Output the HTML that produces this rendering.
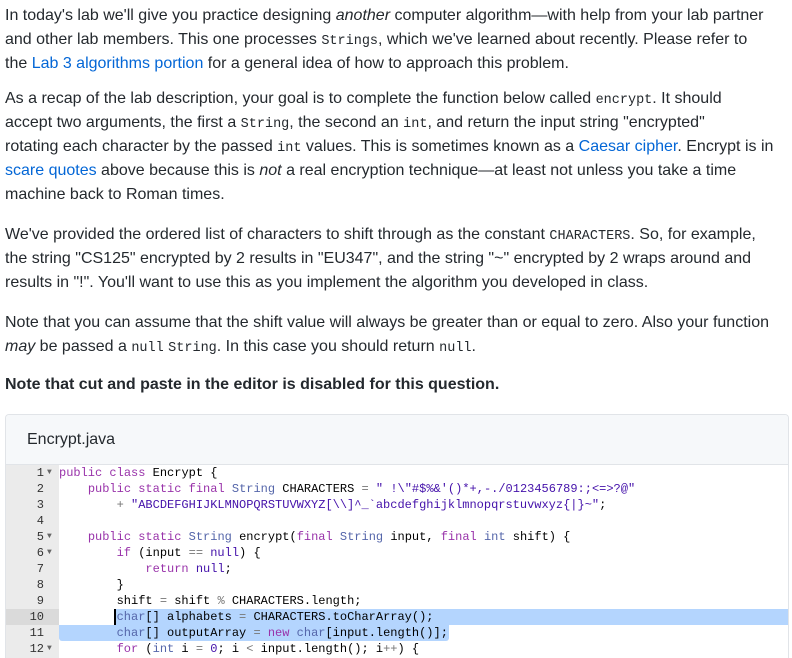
<!DOCTYPE html>
<html><head><style>
html,body{margin:0;height:658px;overflow:hidden}
body{background:#fff;font-family:"Liberation Sans",sans-serif;font-size:16px;line-height:24px;color:#24292e;}
.w{position:absolute;left:5px;top:0;width:787px;white-space:nowrap;overflow:hidden;height:410px}
p{margin:0;position:absolute;left:0}
a{color:#0366d6;text-decoration:none}
code{font-family:"Liberation Mono",monospace;font-size:13.5px;line-height:1}
.card{position:absolute;left:5px;top:414px;width:782px;height:243px;border:1px solid #e1e4e8;border-bottom:none;border-radius:4px 4px 0 0;overflow:hidden}
.hd{height:49px;background:#f6f8fa;border-bottom:1px solid #e1e4e8;font-size:16px;line-height:49px;padding-left:21px;color:#24292e}
.gut{position:absolute;left:0;top:50px;width:53px;height:200px;background:#ebebeb}
.code{position:absolute;left:0;top:50px;width:782px;font-family:"Liberation Mono",monospace;font-size:12px;line-height:16px;color:#000}
.ln{position:absolute;left:0;width:38px;text-align:right;color:#333}
.ar{position:absolute;left:41px;font-size:8px;color:#666}
.tx{position:absolute;left:53px;white-space:pre}
.k{color:#93a}.t{color:#56a}.s{color:#41a}.c{color:#a0a}.o{color:#777}
</style></head><body>
<div class="w">
<p style="top:4px">In today's lab we'll give you practice designing <i>another</i> computer algorithm—with help from your lab partner<br>and other lab members. This one processes <code>Strings</code>, which we've learned about recently. Please refer to<br>the <a>Lab 3 algorithms portion</a> for a general idea of how to approach this problem.</p>
<p style="top:87px">As a recap of the lab description, your goal is to complete the function below called <code>encrypt</code>. It should<br>accept two arguments, the first a <code>String</code>, the second an <code>int</code>, and return the input string "encrypted"<br>rotating each character by the passed <code>int</code> values. This is sometimes known as a <a>Caesar cipher</a>. Encrypt is in<br><a>scare quotes</a> above because this is <i>not</i> a real encryption technique—at least not unless you take a time<br>machine back to Roman times.</p>
<p style="top:223px">We've provided the ordered list of characters to shift through as the constant <code>CHARACTERS</code>. So, for example,<br>the string "CS125" encrypted by 2 results in "EU347", and the string "~" encrypted by 2 wraps around and<br>results in "!". You'll want to use this as you implement the algorithm you developed in class.</p>
<p style="top:311px">Note that you can assume that the shift value will always be greater than or equal to zero. Also your function<br><i>may</i> be passed a <code>null</code> <code>String</code>. In this case you should return <code>null</code>.</p>
<p style="top:373px"><b>Note that cut and paste in the editor is disabled for this question.</b></p>
</div>
<div class="card">
<div class="hd">Encrypt.java</div>
<div class="gut"></div>
<div style="position:absolute;left:0;top:194px;width:53px;height:16px;background:#dadada"></div>
<div style="position:absolute;left:110px;top:194px;width:672px;height:16px;background:#b4d5fe"></div>
<div style="position:absolute;left:53px;top:210px;width:390px;height:16px;background:#b4d5fe;border-radius:0 0 3px 3px"></div>
<div style="position:absolute;left:108px;top:194px;width:2px;height:16px;background:#000"></div>
<div class="code">
<div style="position:relative;top:0">
<span class="ln" style="top:0">1</span><span class="ar" style="top:0">▼</span><span class="tx" style="top:0"><span class="k">public</span> <span class="k">class</span> Encrypt {</span>
<span class="ln" style="top:16px">2</span><span class="tx" style="top:16px">    <span class="k">public</span> <span class="k">static</span> <span class="k">final</span> <span class="t">String</span> CHARACTERS <span class="o">=</span> <span class="s">" !\"#$%&'()*+,-./0123456789:;&lt;=&gt;?@"</span></span>
<span class="ln" style="top:32px">3</span><span class="tx" style="top:32px">        <span class="o">+</span> <span class="s">"ABCDEFGHIJKLMNOPQRSTUVWXYZ[\\]^_`abcdefghijklmnopqrstuvwxyz{|}~"</span>;</span>
<span class="ln" style="top:48px">4</span>
<span class="ln" style="top:64px">5</span><span class="ar" style="top:64px">▼</span><span class="tx" style="top:64px">    <span class="k">public</span> <span class="k">static</span> <span class="t">String</span> encrypt(<span class="k">final</span> <span class="t">String</span> input, <span class="k">final</span> <span class="t">int</span> shift) {</span>
<span class="ln" style="top:80px">6</span><span class="ar" style="top:80px">▼</span><span class="tx" style="top:80px">        <span class="k">if</span> (input <span class="o">==</span> <span class="s">null</span>) {</span>
<span class="ln" style="top:96px">7</span><span class="tx" style="top:96px">            <span class="k">return</span> <span class="s">null</span>;</span>
<span class="ln" style="top:112px">8</span><span class="tx" style="top:112px">        }</span>
<span class="ln" style="top:128px">9</span><span class="tx" style="top:128px">        shift <span class="o">=</span> shift <span class="o">%</span> CHARACTERS.length;</span>
<span class="ln" style="top:144px">10</span><span class="tx" style="top:144px">        <span class="t">char</span>[] alphabets <span class="o">=</span> CHARACTERS.toCharArray();</span>
<span class="ln" style="top:160px">11</span><span class="tx" style="top:160px">        <span class="t">char</span>[] outputArray <span class="o">=</span> <span class="k">new</span> <span class="t">char</span>[input.length()];</span>
<span class="ln" style="top:176px">12</span><span class="ar" style="top:176px">▼</span><span class="tx" style="top:176px">        <span class="k">for</span> (<span class="t">int</span> i <span class="o">=</span> <span class="s">0</span>; i <span class="o">&lt;</span> input.length(); i<span class="o">++</span>) {</span>
</div></div>
</div>
</body></html>
